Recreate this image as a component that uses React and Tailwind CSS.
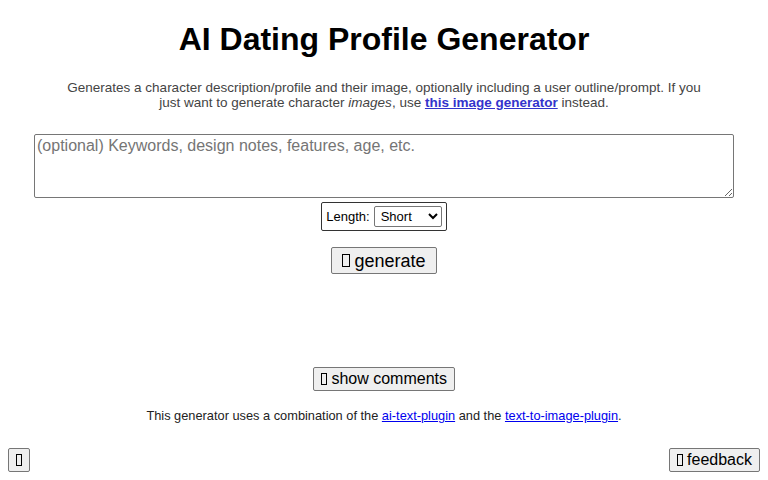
import React from 'react'

function Tofu({ className = '' }) {
  return <span className={`inline-block w-[0.4em] h-[0.72em] border border-current align-[-0.02em] ${className}`} />
}

export default function App() {
  return (
    <div className="min-h-[480px] bg-white text-black font-['Liberation_Sans',Arial,sans-serif] flex flex-col">
      <h1 className="mt-[21px] text-center text-[32px] font-bold leading-[37px]">AI Dating Profile Generator</h1>

      <p className="mt-[22px] mx-auto max-w-[646px] text-center text-[13.5px] leading-[15px] text-[#444]">
        Generates a character description/profile and their image, optionally including a user outline/prompt. If you just want to generate character <i>images</i>, use{' '}
        <a href="#" className="font-bold underline text-[#3333cc]">this image generator</a> instead.
      </p>

      <div className="mt-[24px] flex justify-center">
        <textarea
          className="w-[700px] h-[64px] border border-[#767676] rounded-[2px] px-[2px] py-[1px] text-[16px] leading-[19px] placeholder:text-[#757575] resize-y"
          placeholder="(optional) Keywords, design notes, features, age, etc."
        />
      </div>

      <div className="mt-[4px] flex justify-center">
        <div className="flex items-center gap-[4px] border border-[#333] rounded-[2px] h-[29px] pl-[4px] pr-[4px] text-[13px]">
          <span>Length:</span>
          <select className="h-[21px] w-[68px] border border-[#767676] rounded-[2px] text-[13px] pl-[2px] bg-white appearance-auto">
            <option>Short</option>
            <option>Medium</option>
            <option>Long</option>
          </select>
        </div>
      </div>

      <div className="mt-[16px] flex justify-center">
        <button className="h-[27px] px-[10px] bg-[#efefef] border border-[#767676] rounded-[2px] text-[18px] leading-[20px] flex items-center gap-[5px]">
          <Tofu /> generate
        </button>
      </div>

      <div className="mt-[93px] flex justify-center">
        <button className="h-[24px] px-[7px] bg-[#efefef] border border-[#767676] rounded-[2px] text-[16px] leading-[18px] flex items-center gap-[4px]">
          <Tofu /> show comments
        </button>
      </div>

      <p className="mt-[17px] text-center text-[12.8px] leading-[15px] text-[#222]">
        This generator uses a combination of the <a href="#" className="underline text-[#0000ee]">ai-text-plugin</a> and the{' '}
        <a href="#" className="underline text-[#0000ee]">text-to-image-plugin</a>.
      </p>

      <div className="mt-[25px] px-[8px] flex justify-between items-center">
        <button className="h-[24px] w-[22px] bg-[#efefef] border border-[#767676] rounded-[2px] text-[16px] flex items-center justify-center">
          <Tofu />
        </button>
        <button className="h-[24px] px-[7px] bg-[#efefef] border border-[#767676] rounded-[2px] text-[16px] leading-[18px] flex items-center gap-[4px]">
          <Tofu /> feedback
        </button>
      </div>
    </div>
  )
}
